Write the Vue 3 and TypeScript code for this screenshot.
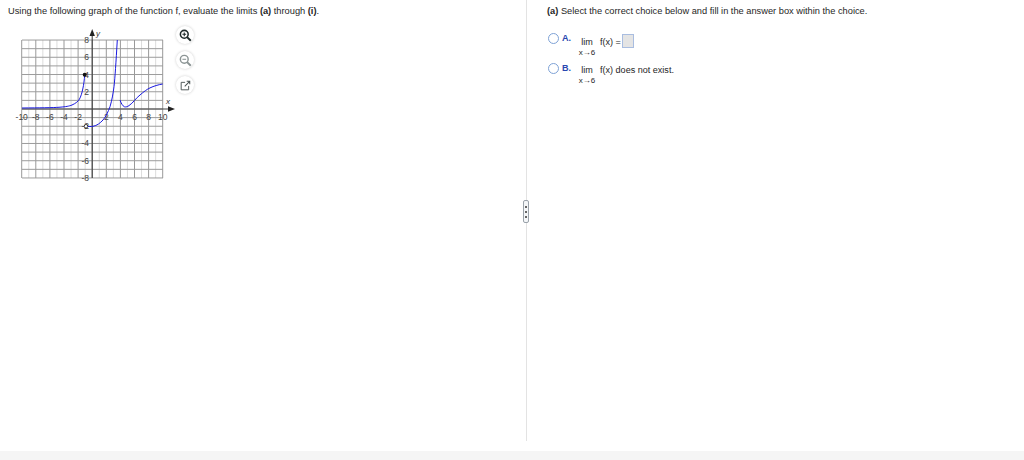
<script setup lang="ts">
const xs = Array.from({ length: 21 }, (_, i) => i - 10);
const ys = Array.from({ length: 17 }, (_, i) => i - 8);
const px = (u: number) => 92.2 + 7.05 * u;
const py = (v: number) => 109 - 8.62 * v;
const xLabels = [-10, -8, -6, -4, -2, 2, 4, 6, 8, 10];
const yLabels = [8, 6, 4, 2, -2, -4, -6, -8];
const actions = [
  { kind: "in" },
  { kind: "out" },
  { kind: "pop" },
];
</script>

<template>
  <div class="page">
    <main class="panes">
      <section class="left">
        <p class="prompt">Using the following graph of the function f, evaluate the limits <b>(a)</b> through <b>(i)</b>.</p>
        <div class="figure">
          <svg class="graph" width="180" height="160" viewBox="0 25 180 160">
            <g v-for="x in xs" :key="'x' + x">
              <line :x1="px(x)" :x2="px(x)" y1="40" y2="178" :stroke="x % 2 === 0 ? '#999' : '#dcdcdc'" stroke-width="1" />
            </g>
            <g v-for="y in ys" :key="'y' + y">
              <line x1="22" x2="163" :y1="py(y)" :y2="py(y)" stroke="#9c9c9c" stroke-width="1" />
            </g>
            <line x1="92.2" x2="92.2" y1="34" y2="178" stroke="#333" stroke-width="1" />
            <line x1="22" x2="172" y1="109" y2="109" stroke="#444" stroke-width="1" />
            <path d="M92.2 29 L89.5 36 L94.9 36 Z" fill="#222" />
            <path d="M175 109 L168 106.3 L168 111.7 Z" fill="#222" />
            <text x="96" y="36" class="axis">y</text>
            <text x="166" y="104" class="axis">x</text>
            <text v-for="l in xLabels" :key="'lx' + l" :x="px(l)" y="119.5" text-anchor="middle" class="tick">{{ l }}</text>
            <text v-for="l in yLabels" :key="'ly' + l" x="89" :y="py(l) + 3" text-anchor="end" class="tick">{{ l }}</text>
            <path d="M22 108 C40 107.8 52 107.8 60 107.2 C66 106.7 69 106.2 72 105 C76 103.2 78 101.5 79.5 99 C82 94.5 84 85 84.7 74.7" fill="none" stroke="#1a1ae0" stroke-width="1" />
            <path d="M86 126.3 C89 126.6 91 126.6 93 126.3 C97 125.6 100 123.2 103 120 C106 116.5 108 112 110 106.7 C112 100 113 94 114 86.7 C115 78 116 62 117.3 40" fill="none" stroke="#1a1ae0" stroke-width="1" />
            <path d="M120 100 C121 103 122.5 106 124.5 106.8 C126 107.2 127.5 106.6 129 105.6 C133 103 136 98 140 95 C144 91.5 147 89.3 150 87.9 C154 86 158 84.8 162.7 84" fill="none" stroke="#1a1ae0" stroke-width="1" />
            <circle cx="84.7" cy="74.7" r="2" fill="#111" />
            <circle cx="86" cy="126.3" r="1.8" fill="#fff" stroke="#111" stroke-width="0.8" />
          </svg>
          <div class="actions">
            <button v-for="a in actions" :key="a.kind" class="round" type="button">
              <svg v-if="a.kind === 'in'" width="13" height="13" viewBox="0 0 16 16">
                <circle cx="6.5" cy="6.5" r="4.8" fill="none" stroke="#1f2b2b" stroke-width="1.9" />
                <path d="M10 10 L14.5 14.5" stroke="#1f2b2b" stroke-width="2.4" />
                <path d="M4.2 6.5 H8.8 M6.5 4.2 V8.8" stroke="#1f2b2b" stroke-width="1.3" />
              </svg>
              <svg v-else-if="a.kind === 'out'" width="13" height="13" viewBox="0 0 16 16">
                <circle cx="6.5" cy="6.5" r="4.8" fill="none" stroke="#8b9494" stroke-width="1.8" />
                <path d="M10 10 L14.5 14.5" stroke="#8b9494" stroke-width="2.4" />
                <path d="M4.2 6.5 H8.8" stroke="#8b9494" stroke-width="1.3" />
              </svg>
              <svg v-else width="11" height="11" viewBox="0 0 14 14">
                <path d="M6.5 3 H1.5 V12.5 H11 V7.5" fill="none" stroke="#4a5454" stroke-width="1.2" />
                <path d="M6 8 L12 2 M8.5 1.6 H12.4 V5.5" fill="none" stroke="#4a5454" stroke-width="1.3" />
              </svg>
            </button>
          </div>
        </div>
      </section>

      <div class="divider">
        <span class="handle"><i></i><i></i><i></i></span>
      </div>

      <section class="right">
        <p class="prompt"><b>(a)</b> Select the correct choice below and fill in the answer box within the choice.</p>
        <div class="choice first">
          <span class="radio"></span>
          <b class="letter">A.</b>
          <span class="lim"><span>lim</span><small>x→6</small></span>
          <span class="expr">f(x) =</span>
          <span class="answer"></span>
        </div>
        <div class="choice second">
          <span class="radio"></span>
          <b class="letter">B.</b>
          <span class="lim"><span>lim</span><small>x→6</small></span>
          <span class="expr">f(x) does not exist.</span>
        </div>
      </section>
    </main>
    <footer class="foot"></footer>
  </div>
</template>

<style scoped>
.page {
  width: 1024px;
  height: 460px;
  display: flex;
  flex-direction: column;
  font-family: "Liberation Sans", Arial, sans-serif;
  color: #262626;
  background: #fff;
  overflow: hidden;
}
.panes {
  flex: 1;
  display: flex;
  min-height: 0;
}
.left {
  width: 526px;
  padding: 6px 0 0 8px;
  box-sizing: border-box;
}
.prompt {
  margin: 0;
  font-size: 9.27px;
  line-height: 11px;
  white-space: nowrap;
}
.figure {
  display: flex;
  margin-top: 8px;
}
.graph {
  display: block;
  margin-left: -8px;
}
.tick {
  font-size: 8.5px;
  font-family: "Liberation Sans", Arial, sans-serif;
  fill: #444;
}
.axis {
  font-size: 8px;
  font-style: italic;
  font-family: "Liberation Sans", Arial, sans-serif;
  fill: #333;
}
.actions {
  display: flex;
  flex-direction: column;
  gap: 7px;
  margin: 1px 0 0 -4px;
}
.round {
  width: 18px;
  height: 18px;
  padding: 0;
  border: 0;
  border-radius: 50%;
  background: #fff;
  box-shadow: 0 0 3px rgba(0, 0, 0, 0.2);
  display: flex;
  align-items: center;
  justify-content: center;
}
.divider {
  width: 1px;
  height: 441px;
  background: #e3e3e3;
  position: relative;
}
.handle {
  position: absolute;
  left: -3px;
  top: 200px;
  width: 6px;
  height: 23px;
  box-sizing: border-box;
  border: 1px solid #9aa2aa;
  border-radius: 2px;
  background: #f4f6f8;
  display: flex;
  flex-direction: column;
  align-items: center;
  justify-content: center;
  gap: 3px;
}
.handle i {
  width: 2px;
  height: 2px;
  background: #666;
}
.right {
  flex: 1;
  padding: 6px 0 0 20px;
}
.choice {
  display: flex;
  align-items: flex-start;
  font-size: 9.05px;
  line-height: 11px;
}
.first {
  margin-top: 16px;
}
.second {
  margin-top: 6px;
}
.radio {
  width: 11px;
  height: 11px;
  box-sizing: border-box;
  border: 1.5px solid #7ea2d6;
  border-radius: 50%;
  margin: 0 3px 0 1px;
}
.letter {
  width: 16px;
  color: #2a48b0;
}
.lim {
  display: flex;
  flex-direction: column;
  align-items: center;
  width: 18px;
}
.first .lim,
.first .expr {
  margin-top: 4px;
}
.second .lim,
.second .expr {
  margin-top: 2px;
}
.lim small {
  font-size: 8px;
  line-height: 9px;
  white-space: nowrap;
}
.expr {
  margin-left: 4px;
  white-space: nowrap;
}
.answer {
  width: 12px;
  height: 14px;
  margin: 1px 0 0 1px;
  box-sizing: border-box;
  border: 1px solid #a9bde0;
  background: #e4e4e4;
}
.foot {
  height: 9px;
  background: #f5f5f5;
}
</style>
